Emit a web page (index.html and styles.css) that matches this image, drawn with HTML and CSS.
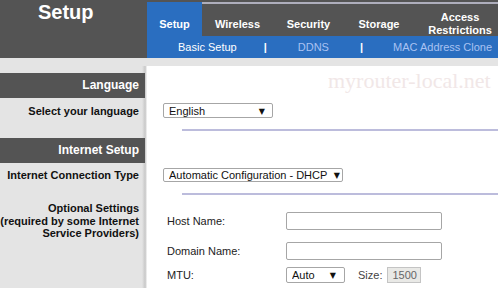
FILE: index.html
```html
<!DOCTYPE html>
<html>
<head>
    <meta charset="utf-8">
    <title>Setup - Basic Setup</title>
    <meta name="viewport" content="width=device-width, initial-scale=1.0">
    <link rel="stylesheet" href="styles.css">
</head>
<body>
    <!-- Top bar -->
    <header class="topbar">
        <div class="brand">Setup</div>
        <nav class="nav">
            <ul class="tabs">
                <li class="tab tab-setup active">Setup</li>
                <li class="tab tab-wireless">Wireless</li>
                <li class="tab tab-security">Security</li>
                <li class="tab tab-storage">Storage</li>
                <li class="tab tab-access">Access<br>Restrictions</li>
            </ul>
            <div class="subtabs">
                <a href="#" class="current">Basic Setup</a>
                <span class="sep">|</span>
                <a href="#">DDNS</a>
                <span class="sep sep-last">|</span>
                <a href="#">MAC Address Clone</a>
            </div>
        </nav>
    </header>

    <!-- Settings -->
    <div class="content">
        <span class="watermark">myrouter-local.net</span>

        <div class="side"><div class="section-bar">Language</div></div>
        <div class="main"></div>

        <div class="side label">Select your language</div>
        <div class="main">
            <div class="select select-lang">
                <select><option>English</option></select>
            </div>
        </div>

        <div class="side"></div>
        <div class="main divider-row"><div class="divider"></div></div>

        <div class="side"><div class="section-bar tall">Internet Setup</div></div>
        <div class="main"></div>

        <div class="side label">Internet Connection Type</div>
        <div class="main">
            <div class="select select-type">
                <select><option>Automatic Configuration - DHCP</option></select>
            </div>
        </div>

        <div class="side label optional">Optional Settings<br>(required by some Internet<br>Service Providers)</div>
        <div class="main divider-row second"><div class="divider"></div></div>

        <div class="main field">
            <label for="host">Host Name:</label>
            <input type="text" id="host" class="text-input">
        </div>

        <div class="main field">
            <label for="domain">Domain Name:</label>
            <input type="text" id="domain" class="text-input">
        </div>

        <div class="main field">
            <label>MTU:</label>
            <div class="select select-mtu">
                <select><option>Auto</option></select>
            </div>
            <span class="size-label">Size:</span>
            <input type="text" class="size-input" value="1500" disabled>
        </div>
    </div>
</body>
</html>
```

FILE: styles.css
```css
* {
    box-sizing: border-box;
    margin: 0;
    padding: 0;
}

body {
    font-family: "Liberation Sans", Arial, sans-serif;
    font-size: 11px;
    background-color: #e4e4e4;
    overflow: hidden;
}

/* Top bar */
.topbar {
    display: flex;
    height: 58px;
    background-color: #545454;
}

.brand {
    width: 147px;
    padding-left: 38px;
    color: white;
    font-size: 20px;
    font-weight: bold;
    line-height: 24px;
}

.nav {
    flex: 1;
    display: flex;
    flex-direction: column;
    padding-top: 2px;
}

.tabs {
    display: flex;
    list-style: none;
    height: 34px;
}

.tab {
    display: flex;
    align-items: center;
    justify-content: center;
    padding-top: 8px;
    color: white;
    font-weight: bold;
    line-height: 13px;
    text-align: center;
    border-top: 2px solid #aeaebc;
}

.tab.active {
    background-color: #2a6ec0;
    border-top-color: #2a6ec0;
}

.tab-setup { width: 55px; }
.tab-wireless { width: 71px; }
.tab-security { width: 71px; }
.tab-storage { width: 70px; }
.tab-access { flex: 1; padding-left: 8px; }

.subtabs {
    display: flex;
    align-items: center;
    height: 22px;
    padding-left: 31px;
    background-color: #2a6ec0;
    white-space: nowrap;
}

.subtabs a {
    color: #a9c2f2;
    text-decoration: none;
}

.subtabs a.current {
    color: white;
}

.sep {
    color: white;
    font-weight: bold;
    margin: 0 31px 0 27px;
}

.sep-last {
    margin: 0 30px 0 31px;
}

/* Settings grid */
.content {
    position: relative;
    display: grid;
    grid-template-columns: 147px 1fr;
    grid-template-rows: 33px 23px 16px 25px 24px 19px 30px 30px 18px;
    margin-top: 8px;
    height: 222px;
    background: linear-gradient(to right, #e4e4e4 142px, #c9c9c9 145px, #d6d6d6 146px, white 147px);
}

.watermark {
    position: absolute;
    left: 328px;
    top: 4px;
    font-family: "Liberation Serif", "Times New Roman", serif;
    font-size: 22px;
    line-height: 22px;
    color: #f1e7e7;
    white-space: nowrap;
}

.side {
    grid-column: 1;
}

.section-bar {
    margin-top: 7px;
    margin-right: 2px;
    height: 25px;
    padding-right: 6px;
    background-color: #545454;
    color: white;
    font-size: 12px;
    font-weight: bold;
    line-height: 25px;
    text-align: right;
}

.section-bar.tall {
    margin-top: 0;
}

.label {
    display: flex;
    align-items: center;
    justify-content: flex-end;
    padding-right: 8px;
    font-weight: bold;
    color: #111;
    text-align: right;
    white-space: nowrap;
}

.label.optional {
    grid-row: 6 / span 4;
    align-items: flex-start;
    padding-top: 15px;
    line-height: 12.5px;
}

.main {
    grid-column: 2;
    display: flex;
    align-items: center;
    padding-left: 16px;
}

.divider-row {
    align-items: flex-start;
    padding-left: 35px;
    padding-top: 7px;
}

.divider-row.second {
    padding-top: 6px;
}

.divider {
    width: 100%;
    height: 2px;
    background-color: #bcbcdc;
}

/* Fake select boxes */
.select {
    position: relative;
}

.select select {
    appearance: none;
    -webkit-appearance: none;
    width: 100%;
    height: 100%;
    padding: 0 0 0 5px;
    border: 1px solid #a6a6a6;
    border-radius: 2px;
    background: white;
    font-family: "Liberation Sans", Arial, sans-serif;
    font-size: 11px;
    color: #111;
}

.select::after {
    content: "\25BC";
    position: absolute;
    right: 8px;
    top: 50%;
    transform: translateY(-50%);
    font-family: "DejaVu Sans", sans-serif;
    font-size: 8px;
    color: #111;
    pointer-events: none;
}

.select-lang { width: 110px; height: 15px; }
.select-type { width: 180px; height: 14px; }
.select-mtu { width: 59px; height: 16px; }

.select-type::after { right: 3px; }
.select-mtu::after { right: 9px; }

/* Form fields */
.field {
    padding-left: 20px;
}

.field label {
    width: 119px;
    color: #222;
}

.text-input {
    width: 156px;
    height: 18px;
    border: 1px solid #a6a6a6;
    border-radius: 2px;
    background: white;
}

.size-label {
    margin-left: 13px;
    color: #444;
}

.size-input {
    width: 34px;
    height: 16px;
    margin-left: 5px;
    padding-left: 4px;
    border: 1px solid #c4c4c4;
    background: #e9e9e6;
    color: #666;
    font-family: "Liberation Sans", Arial, sans-serif;
    font-size: 11px;
}
```
